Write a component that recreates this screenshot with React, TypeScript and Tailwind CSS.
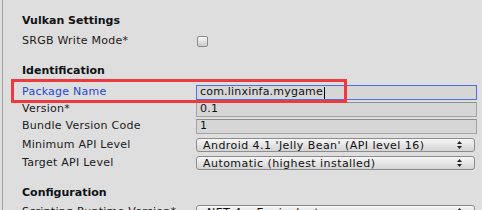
import React from "react";

const font = { fontFamily: '"DejaVu Sans", "Verdana", sans-serif' };

function Header({ title, className }: { title: string; className: string }) {
  return (
    <div className={`h-[16px] flex items-center font-bold text-[11px] text-[#111] ${className}`}>
      {title}
    </div>
  );
}

function TextRow({
  label,
  value,
  focused,
}: {
  label: string;
  value: string;
  focused?: boolean;
}) {
  return (
    <div className="h-[17px] flex items-center">
      <div
        className={`w-[174px] shrink-0 text-[11px] tracking-[0.25px] ${
          focused ? "text-[#2447d8]" : "text-[#1a1a1a]"
        }`}
      >
        {label}
      </div>
      <div
        className={`w-[281px] h-[15px] flex items-center pl-[3px] text-[11px] tracking-[0.2px] text-[#111] bg-[#d6d6d6] border ${
          focused
            ? "border-[#4f6fe6]"
            : "border-[#a3a3a3] border-t-[#8e8e8e]"
        }`}
      >
        {value}
        {focused && <span className="w-px h-[12px] bg-black ml-[1px]" />}
      </div>
    </div>
  );
}

function Arrows() {
  return (
    <svg width="5" height="8" viewBox="0 0 5 8" className="shrink-0">
      <path d="M2.5 0 L5 3 L0 3 Z" fill="#222" />
      <path d="M0 5 L5 5 L2.5 8 Z" fill="#222" />
    </svg>
  );
}

function DropdownRow({ label, value }: { label: string; value: string }) {
  return (
    <div className="h-[18px] flex items-center">
      <div className="w-[174px] shrink-0 text-[11px] tracking-[0.25px] text-[#1a1a1a]">{label}</div>
      <div className="w-[279px] h-[14px] flex items-center justify-between pl-[6px] pr-[12px] text-[11px] tracking-[0.45px] text-[#111] rounded-[3px] border border-[#8c8c8c] bg-gradient-to-b from-[#f6f6f6] to-[#d4d4d4]">
        <span className="leading-none">{value}</span>
        <Arrows />
      </div>
    </div>
  );
}

export default function App() {
  return (
    <div
      className="w-[482px] h-[210px] bg-[#dedede] overflow-hidden relative"
      style={font}
    >
      <div className="ml-[2px] h-full border-l border-[#a0a0a0] pl-[19px] flex flex-col">
        <Header title="Vulkan Settings" className="mt-[13px]" />
        <div className="h-[16px] mt-[4px] flex items-center">
          <div className="w-[175px] shrink-0 text-[11px] tracking-[0.25px] text-[#1a1a1a]">SRGB Write Mode*</div>
          <div className="w-[11px] h-[11px] rounded-[2px] border border-[#8a8a8a] bg-gradient-to-b from-[#fafafa] to-[#cacaca]" />
        </div>
        <Header title="Identification" className="mt-[14px]" />
        <div className="mt-[5px]">
          <TextRow label="Package Name" value="com.linxinfa.mygame" focused />
          <TextRow label="Version*" value="0.1" />
          <TextRow label="Bundle Version Code" value="1" />
          <div className="h-px" />
          <DropdownRow
            label="Minimum API Level"
            value="Android 4.1 'Jelly Bean' (API level 16)"
          />
          <DropdownRow label="Target API Level" value="Automatic (highest installed)" />
        </div>
        <Header title="Configuration" className="mt-[13px]" />
        <div className="mt-[2px]">
          <DropdownRow label="Scripting Runtime Version*" value=".NET 4.x Equivalent" />
        </div>
      </div>
      <div className="absolute left-[11px] top-[79px] w-[336px] h-[24px] border-[3px] border-[#ec3a3e]" />
    </div>
  );
}
